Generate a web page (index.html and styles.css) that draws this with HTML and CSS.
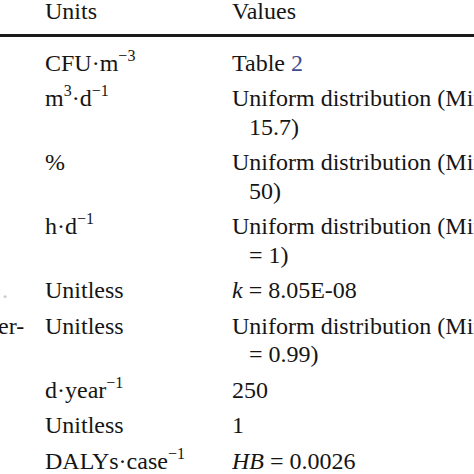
FILE: index.html
```html
<!DOCTYPE html>
<html>
<head>
<meta charset="utf-8">
<link rel="stylesheet" href="styles.css">
</head>
<body>
<div class="table">
  <div class="row head">
    <div class="c1"></div>
    <div class="c2">Units</div>
    <div class="c3">Values</div>
  </div>
  <div class="rule"></div>
  <div class="body">
    <div class="row first">
      <div class="c1"></div>
      <div class="c2">CFU·m<sup>−3</sup></div>
      <div class="c3">Table <span class="link">2</span></div>
    </div>
    <div class="row">
      <div class="c1"></div>
      <div class="c2">m<sup>3</sup>·d<sup>−1</sup></div>
      <div class="c3"><span class="line">Uniform distribution (Min = 10.8, Max =</span><span class="line cont">15.7)</span></div>
    </div>
    <div class="row">
      <div class="c1"></div>
      <div class="c2">%</div>
      <div class="c3"><span class="line">Uniform distribution (Min = 10, Max =</span><span class="line cont">50)</span></div>
    </div>
    <div class="row">
      <div class="c1"></div>
      <div class="c2">h·d<sup>−1</sup></div>
      <div class="c3"><span class="line">Uniform distribution (Min = 0.5, Max</span><span class="line cont">= 1)</span></div>
    </div>
    <div class="row">
      <div class="c1"><span class="smudge">.</span></div>
      <div class="c2">Unitless</div>
      <div class="c3"><i>k</i> = 8.05E-08</div>
    </div>
    <div class="row">
      <div class="c1"><span class="frag">er-</span></div>
      <div class="c2">Unitless</div>
      <div class="c3"><span class="line">Uniform distribution (Min = 0.5, Max</span><span class="line cont">= 0.99)</span></div>
    </div>
    <div class="row">
      <div class="c1"></div>
      <div class="c2">d·year<sup>−1</sup></div>
      <div class="c3">250</div>
    </div>
    <div class="row">
      <div class="c1"></div>
      <div class="c2">Unitless</div>
      <div class="c3">1</div>
    </div>
    <div class="row">
      <div class="c1"></div>
      <div class="c2">DALYs·case<sup>−1</sup></div>
      <div class="c3"><i>HB</i> = 0.0026</div>
    </div>
  </div>
</div>
</body>
</html>
```
FILE: styles.css
```css
html, body {
  margin: 0;
  padding: 0;
  background: #ffffff;
  overflow: hidden;
}
body {
  width: 474px;
  height: 474px;
  font-family: "Liberation Serif", "Times New Roman", serif;
  font-size: 24px;
  color: #151515;
}
.table {
  width: 474px;
  overflow: hidden;
}
.row {
  display: grid;
  grid-template-columns: 45px 187px 242px;
  line-height: 28.5px;
  padding: 3.5px 0;
}
.row > div {
  white-space: nowrap;
  overflow: hidden;
}
.line {
  display: block;
}
.cont {
  padding-left: 17px;
}
.head {
  line-height: 22px;
  padding: 0 0 12px 0;
}
.rule {
  height: 2.5px;
  background: #1a1a1a;
}
.first {
  margin-top: 8.75px;
}
sup {
  font-size: 16px;
  line-height: 0;
  vertical-align: 0;
  position: relative;
  top: -10px;
}
.link {
  color: #3f4c92;
}
.frag {
  display: inline-block;
  margin-left: -2px;
}
.smudge {
  color: #c8c8c8;
  margin-left: 2px;
}
```
